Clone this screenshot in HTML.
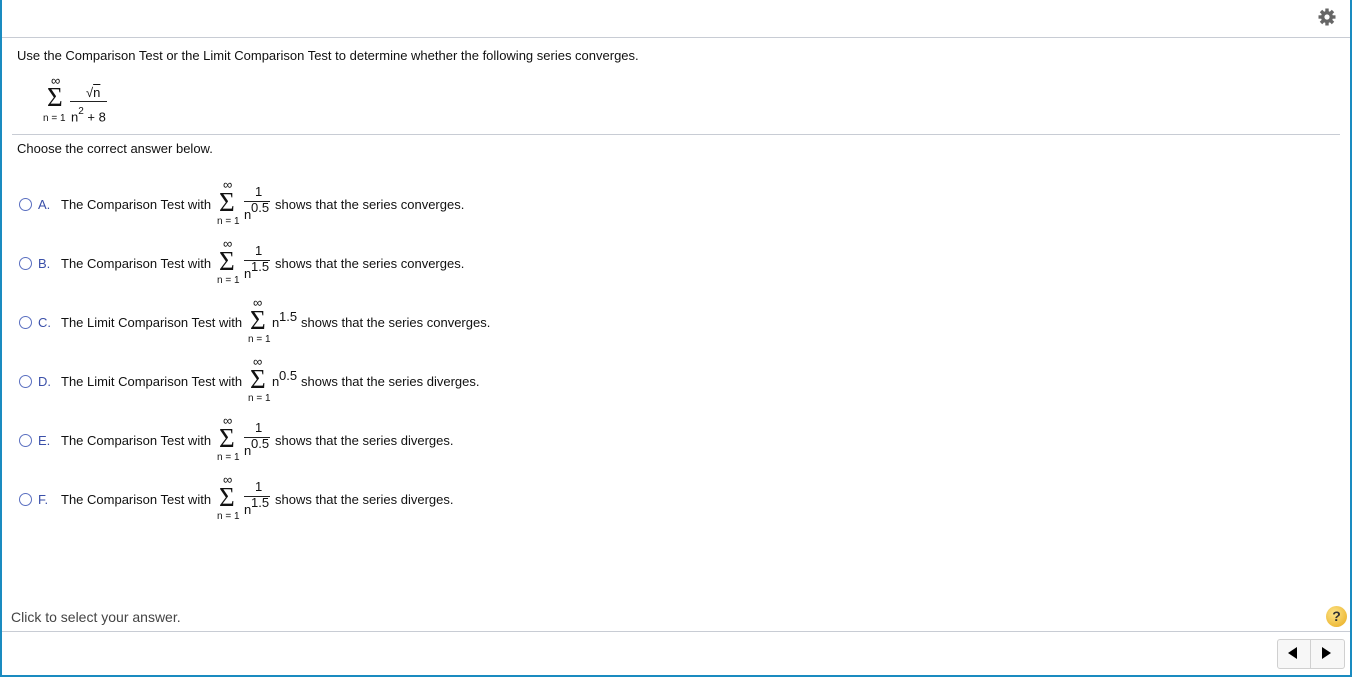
<!DOCTYPE html>
<html><head><meta charset="utf-8"><style>
html,body{margin:0;padding:0;}
body{width:1352px;height:677px;position:relative;background:#fff;font-family:"Liberation Sans",Arial,sans-serif;color:#111;overflow:hidden;}
.a{position:absolute;white-space:nowrap;line-height:1;}
.t{font-size:13px;}
.s{font-size:10px;}
.sig{font-family:"Liberation Serif",serif;font-size:27px;}
.inf{font-size:13px;}
.rad{position:absolute;width:11px;height:11px;border:1.3px solid #5a6fc0;border-radius:50%;}
.let{position:absolute;font-size:13px;color:#3a4fa8;line-height:1;}
.hr{position:absolute;height:1px;background:#c8ccd4;}
.fl{position:absolute;height:1px;background:#222;}
</style></head><body>
<div style="position:absolute;left:0;top:0;width:2px;height:677px;background:#1a8bc0"></div>
<div style="position:absolute;right:0;top:0;width:2px;height:677px;background:#1a8bc0"></div>
<div style="position:absolute;left:0;bottom:0;width:1352px;height:2px;background:#1a8bc0"></div>
<div class="hr" style="left:2px;top:37px;width:1348px"></div>
<svg style="position:absolute;left:1318px;top:8px" width="18" height="18" viewBox="0 0 18 18">
<g fill="#666"><circle cx="9" cy="9" r="6"/>
<rect x="7.3" y="0.5" width="3.4" height="17"/><rect x="0.5" y="7.3" width="17" height="3.4"/>
<rect x="7.3" y="0.5" width="3.4" height="17" transform="rotate(45 9 9)"/><rect x="7.3" y="0.5" width="3.4" height="17" transform="rotate(-45 9 9)"/></g>
<circle cx="9" cy="9" r="2.6" fill="#fff"/></svg>

<div class="a t" style="left:17px;top:49px">Use the Comparison Test or the Limit Comparison Test to determine whether the following series converges.</div>

<div class="a inf" style="left:51px;top:74px">∞</div>
<div class="a sig" style="left:47px;top:84px">Σ</div>
<div class="a s" style="left:43px;top:114px">n = 1</div>
<div class="a t" style="left:86px;top:86px">√<span style="text-decoration:overline">n</span></div>
<div class="fl" style="left:70px;top:101px;width:37px"></div>
<div class="a t" style="left:71px;top:109px">n<sup style="font-size:10px;position:relative;top:-2px">2</sup> + 8</div>

<div class="hr" style="left:12px;top:134px;width:1328px"></div>
<div class="a t" style="left:17px;top:142px">Choose the correct answer below.</div>

<!-- A -->
<div class="rad" style="left:19px;top:198px"></div><div class="let" style="left:38px;top:198px">A.</div>
<div class="a t" style="left:61px;top:198px">The Comparison Test with</div>
<div class="a inf" style="left:223px;top:178px">∞</div><div class="a sig" style="left:219px;top:189px">Σ</div>
<div class="a s" style="left:217px;top:217px">n = 1</div>
<div class="a t" style="left:255px;top:185px">1</div><div class="fl" style="left:244px;top:201px;width:26px"></div>
<div class="a t" style="left:244px;top:208px">n</div><div class="a t" style="left:251px;top:201px">0.5</div>
<div class="a t" style="left:275px;top:198px">shows that the series converges.</div>
<!-- B -->
<div class="rad" style="left:19px;top:257px"></div><div class="let" style="left:38px;top:257px">B.</div>
<div class="a t" style="left:61px;top:257px">The Comparison Test with</div>
<div class="a inf" style="left:223px;top:237px">∞</div><div class="a sig" style="left:219px;top:248px">Σ</div>
<div class="a s" style="left:217px;top:276px">n = 1</div>
<div class="a t" style="left:255px;top:244px">1</div><div class="fl" style="left:244px;top:260px;width:26px"></div>
<div class="a t" style="left:244px;top:267px">n</div><div class="a t" style="left:251px;top:260px">1.5</div>
<div class="a t" style="left:275px;top:257px">shows that the series converges.</div>
<!-- C -->
<div class="rad" style="left:19px;top:316px"></div><div class="let" style="left:38px;top:316px">C.</div>
<div class="a t" style="left:61px;top:316px">The Limit Comparison Test with</div>
<div class="a inf" style="left:253px;top:296px">∞</div><div class="a sig" style="left:250px;top:307px">Σ</div>
<div class="a s" style="left:248px;top:335px">n = 1</div>
<div class="a t" style="left:272px;top:316px">n</div><div class="a t" style="left:279px;top:310px">1.5</div>
<div class="a t" style="left:301px;top:316px">shows that the series converges.</div>
<!-- D -->
<div class="rad" style="left:19px;top:375px"></div><div class="let" style="left:38px;top:375px">D.</div>
<div class="a t" style="left:61px;top:375px">The Limit Comparison Test with</div>
<div class="a inf" style="left:253px;top:355px">∞</div><div class="a sig" style="left:250px;top:366px">Σ</div>
<div class="a s" style="left:248px;top:394px">n = 1</div>
<div class="a t" style="left:272px;top:375px">n</div><div class="a t" style="left:279px;top:369px">0.5</div>
<div class="a t" style="left:301px;top:375px">shows that the series diverges.</div>
<!-- E -->
<div class="rad" style="left:19px;top:434px"></div><div class="let" style="left:38px;top:434px">E.</div>
<div class="a t" style="left:61px;top:434px">The Comparison Test with</div>
<div class="a inf" style="left:223px;top:414px">∞</div><div class="a sig" style="left:219px;top:425px">Σ</div>
<div class="a s" style="left:217px;top:453px">n = 1</div>
<div class="a t" style="left:255px;top:421px">1</div><div class="fl" style="left:244px;top:437px;width:26px"></div>
<div class="a t" style="left:244px;top:444px">n</div><div class="a t" style="left:251px;top:437px">0.5</div>
<div class="a t" style="left:275px;top:434px">shows that the series diverges.</div>
<!-- F -->
<div class="rad" style="left:19px;top:493px"></div><div class="let" style="left:38px;top:493px">F.</div>
<div class="a t" style="left:61px;top:493px">The Comparison Test with</div>
<div class="a inf" style="left:223px;top:473px">∞</div><div class="a sig" style="left:219px;top:484px">Σ</div>
<div class="a s" style="left:217px;top:512px">n = 1</div>
<div class="a t" style="left:255px;top:480px">1</div><div class="fl" style="left:244px;top:496px;width:26px"></div>
<div class="a t" style="left:244px;top:503px">n</div><div class="a t" style="left:251px;top:496px">1.5</div>
<div class="a t" style="left:275px;top:493px">shows that the series diverges.</div>

<div class="a" style="left:11px;top:610px;font-size:14px;color:#444">Click to select your answer.</div>
<div style="position:absolute;left:1326px;top:606px;width:21px;height:21px;border-radius:50%;background:radial-gradient(circle at 40% 35%,#fde58a,#e8a91a);text-align:center;font:bold 14px/21px 'Liberation Sans',sans-serif;color:#333">?</div>
<div class="hr" style="left:2px;top:631px;width:1348px"></div>
<div style="position:absolute;left:1277px;top:639px;width:66px;height:28px;border:1px solid #d0d0d0;border-radius:3px;background:#f7f7f7"></div>
<div style="position:absolute;left:1310px;top:640px;width:1px;height:28px;background:#d0d0d0"></div>
<svg style="position:absolute;left:1287px;top:646px" width="12" height="14"><polygon points="10,1 10,13 1,7" fill="#000"/></svg>
<svg style="position:absolute;left:1321px;top:646px" width="12" height="14"><polygon points="1,1 1,13 10,7" fill="#000"/></svg>
</body></html>
